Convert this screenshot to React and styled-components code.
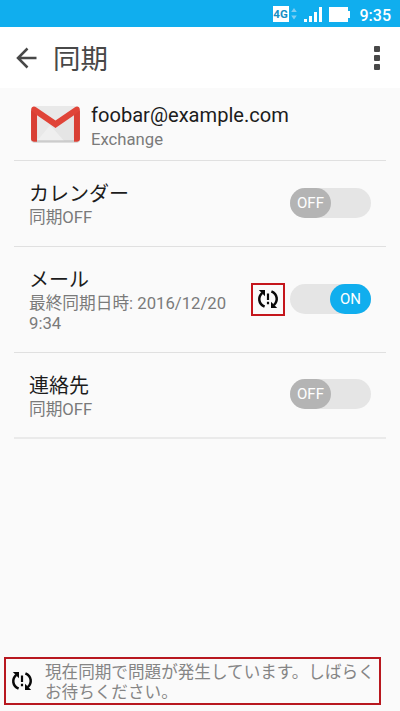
import styled, { createGlobalStyle } from 'styled-components'

const rows = [
  { id: 'calendar', title: 'カレンダー', detail: '同期OFF', on: false, height: 86 },
  { id: 'mail', title: 'メール', detail: '最終同期日時: 2016/12/20 9:34', on: true, warning: true, height: 106 },
  { id: 'contacts', title: '連絡先', detail: '同期OFF', on: false, height: 86 },
]

function SyncProblemIcon() {
  return (
    <svg width="22" height="20" viewBox="0 0 22 20" fill="none" stroke="#080808" strokeWidth="2.5">
      <path d="M7.6 17.6C1.2 14.8 .8 8 5.2 3.8" />
      <path d="M14.4 2.4C20.8 5.2 21.2 12 16.8 16.2" />
      <path d="M1.8 1H8V7.2Z" fill="#080808" stroke="none" />
      <path d="M20.2 19H14V12.8Z" fill="#080808" stroke="none" />
      <path d="M11 4.5V11M11 12.8V15.2" strokeWidth="2.2" />
    </svg>
  )
}

function GmailIcon() {
  return (
    <GmailLogo width="49" height="36" viewBox="0 0 50 37">
      <rect x="1" y="0" width="48" height="36.5" rx="3" fill="#e9e9e9" />
      <path d="M6 36V9L25 22.5L44 9V36Z" fill="#efefef" />
      <path d="M6 36L20 19L25 22.5L6 9Z" fill="#e8e8e8" />
      <path d="M25 22.5L44 9V36H34L18 18Z" fill="#dedede" opacity=".6" />
      <path d="M0 4C0 .5 3 -.2 5 1.3L25 15L45 1.3C47 -.2 50 .5 50 4V33.5Q50 36.5 47 36.5H44V9.5L25 22.5L6 9.5V36.5H3Q0 36.5 0 33.5Z" fill="#e04438" />
      <path d="M0 4.5L6 9.5V36.5H3Q0 36.5 0 33.5ZM50 4.5L44 9.5V36.5H47Q50 36.5 50 33.5Z" fill="#d93f34" />
      <path d="M6 36H44" stroke="#b9b9b9" strokeWidth="1" />
    </GmailLogo>
  )
}

function App() {
  return (
    <Screen>
      <GlobalStyle />
      <StatusBar>
        <Network>4G</Network>
        <svg width="6" height="14" viewBox="0 0 6 14" fill="#7fcdf2">
          <path d="M3 1L5.8 5H.2ZM3 12.5L.2 8.5H5.8Z" />
        </svg>
        <Signal width="18" height="15" viewBox="0 0 18 15" fill="#fff">
          <path d="M0 12H3V15H0ZM5 9H8V15H5ZM10 5H13V15H10ZM15 0H18V15H15Z" />
        </Signal>
        <Battery width="21" height="15" viewBox="0 0 21 15" fill="#fff">
          <path d="M0 0H19V4H21V11H19V15H0Z" />
        </Battery>
        <Clock>9:35</Clock>
      </StatusBar>
      <Header>
        <svg width="22" height="22" viewBox="0 0 22 22" fill="none" stroke="#484848" strokeWidth="2.5">
          <path d="M20.5 11H2M11.5 1.5L2 11L11.5 20.5" />
        </svg>
        <Heading>同期</Heading>
        <Menu>
          <Dot />
          <Dot />
          <Dot />
        </Menu>
      </Header>
      <Content>
        <Account>
          <GmailIcon />
          <AccountText>
            <Email>foobar@example.com</Email>
            <Detail>Exchange</Detail>
          </AccountText>
        </Account>
        {rows.map(row => (
          <Row key={row.id} $height={row.height}>
            <RowText>
              <Title>{row.title}</Title>
              <Detail>{row.detail}</Detail>
            </RowText>
            {row.warning && (
              <Warning>
                <SyncProblemIcon />
              </Warning>
            )}
            <Switch $on={row.on}>
              <Knob $on={row.on}>{row.on ? 'ON' : 'OFF'}</Knob>
            </Switch>
          </Row>
        ))}
      </Content>
      <Notice>
        <SyncProblemIcon />
        <NoticeText>現在同期で問題が発生しています。しばらくお待ちください。</NoticeText>
      </Notice>
    </Screen>
  )
}

const GlobalStyle = createGlobalStyle`
  * {
    box-sizing: border-box;
  }
  body {
    margin: 0;
    background: #fafafa;
    font-family: Roboto, 'Noto Sans CJK JP', sans-serif;
  }
  svg {
    display: block;
    flex-shrink: 0;
  }
`
const Screen = styled.div`
  width: 400px;
  height: 711px;
  display: flex;
  flex-direction: column;
  overflow: hidden;
  background: #fafafa;
`
const StatusBar = styled.div`
  height: 27px;
  flex-shrink: 0;
  display: flex;
  align-items: center;
  justify-content: flex-end;
  padding: 1px 9px 0 0;
  background: #10aeee;
`
const Network = styled.div`
  width: 16px;
  height: 16px;
  margin-right: 2px;
  background: #fff;
  color: #168fc4;
  font-size: 11.5px;
  font-weight: 700;
  line-height: 17px;
  text-align: center;
`
const Signal = styled.svg`
  margin: 1px 0 0 7px;
`
const Battery = styled.svg`
  margin-left: 7px;
`
const Clock = styled.div`
  margin: 3px 0 0 10px;
  color: #fff;
  font-size: 16px;
  font-weight: 500;
  line-height: 20px;
`
const Header = styled.header`
  height: 61px;
  flex-shrink: 0;
  display: flex;
  align-items: center;
  padding: 0 20px 0 16px;
  background: #fff;
`
const Heading = styled.h1`
  flex: 1;
  margin: 5px 0 0 15px;
  color: #484848;
  font-size: 27.5px;
  font-weight: 400;
  line-height: 36px;
`
const Menu = styled.div`
  display: flex;
  flex-direction: column;
  gap: 3px;
`
const Dot = styled.span`
  width: 6px;
  height: 6px;
  border-radius: 1px;
  background: #484848;
`
const Content = styled.main`
  flex: 1;
  padding: 0 14px;
`
const Account = styled.section`
  height: 73px;
  display: flex;
  padding: 18px 0 0 17px;
  border-bottom: 1px solid #e0e0e0;
`
const GmailLogo = styled.svg`
  filter: drop-shadow(0 1px 0 #d5d5d5);
`
const AccountText = styled.div`
  display: flex;
  flex-direction: column;
  gap: 2px;
  margin: -3px 0 0 11px;
`
const Email = styled.div`
  color: #1c1c1c;
  font-size: 20.1px;
  line-height: 25px;
`
const Detail = styled.div`
  color: #7a7a7a;
  font-size: 16.7px;
  line-height: 20px;
`
const RowText = styled.div`
  width: 204px;
  margin-right: auto;
  padding-top: 2px;
`
const Row = styled.section`
  height: ${props => props.$height}px;
  display: flex;
  align-items: center;
  padding: 0 15px 1px;
  border-bottom: 1px solid #e0e0e0;
  &:last-child {
    padding-bottom: 2px;
    border-bottom: 2px solid #eaeaea;
  }
  &:last-child ${RowText} {
    padding-top: 4px;
  }
`
const Title = styled.div`
  margin-bottom: 1px;
  color: #1c1c1c;
  font-size: 20px;
  line-height: 26px;
`
const Warning = styled.div`
  width: 34px;
  height: 33px;
  display: flex;
  align-items: center;
  justify-content: center;
  margin-right: 5px;
  border: 2px solid #c4161c;
`
const Switch = styled.div`
  width: 81px;
  height: 30px;
  display: flex;
  justify-content: ${props => props.$on ? 'flex-end' : 'flex-start'};
  border-radius: 15px;
  background: #e5e5e5;
`
const Knob = styled.div`
  width: 41px;
  height: 30px;
  border-radius: 15px;
  background: ${props => props.$on ? '#10aeee' : '#b4b4b4'};
  color: #fff;
  font-size: 15px;
  line-height: 31px;
  text-align: center;
`
const Notice = styled.footer`
  width: 377px;
  height: 48px;
  flex-shrink: 0;
  display: flex;
  align-items: center;
  margin: 0 0 6px 4px;
  padding: 0 0 0 5px;
  border: 2px solid #b8181f;
`
const NoticeText = styled.div`
  width: 336px;
  margin: 3px 0 0 12px;
  color: #858585;
  font-size: 16.6px;
  line-height: 20px;
`

export default App;
